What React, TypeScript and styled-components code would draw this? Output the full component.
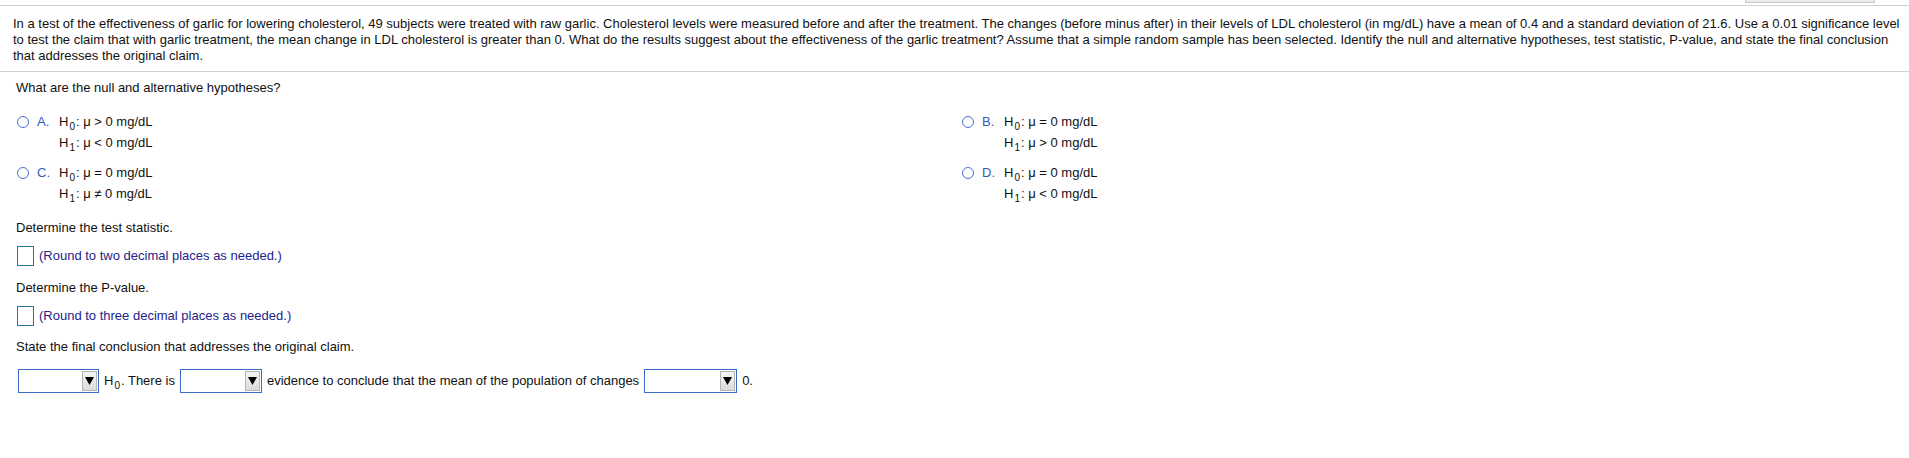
import React from "react";
import styled, { createGlobalStyle } from "styled-components";

const Global = createGlobalStyle`
  html, body { margin: 0; padding: 0; background: #fff; }
  body { font-family: "Liberation Sans", Arial, sans-serif; font-size: 13px; color: #111; }
`;

const Page = styled.div`
  width: 1909px;
  min-height: 458px;
  background: #fff;
`;

const TopStrip = styled.div`
  height: 5px;
  border-bottom: 1px solid #cfd0d6;
  display: flex;
  justify-content: flex-end;
  padding-right: 34px;
`;

const TabStub = styled.div`
  width: 128px;
  height: 2px;
  background: #ececec;
  border: 1px solid #c8c8c8;
  border-top: none;
`;

const Problem = styled.div`
  padding: 10px 8px 7px 13px;
  line-height: 16px;
`;

const Separator = styled.div`
  height: 1px;
  background: #cfd0d6;
`;

const Body = styled.div`
  padding: 8px 0 0 16px;
  line-height: 16px;
`;

const Prompt = styled.div<{ $mt?: number }>`
  margin-top: ${(p) => p.$mt ?? 0}px;
`;

const Options = styled.div`
  display: grid;
  grid-template-columns: 945px 1fr;
  row-gap: 10px;
  margin-top: 16px;
`;

const Option = styled.div`
  display: flex;
  align-items: flex-start;
`;

const Radio = styled.span`
  width: 10px;
  height: 10px;
  border: 1.5px solid #4a6fd3;
  border-radius: 50%;
  margin: 4px 0 0 1px;
  flex: none;
`;

const Letter = styled.span`
  color: #3457c0;
  width: 30px;
  padding-left: 8px;
  box-sizing: border-box;
  line-height: 20px;
  flex: none;
`;

const Hyp = styled.div`
  display: flex;
  flex-direction: column;
`;

const HypLine = styled.div`
  height: 20.5px;
  line-height: 20px;
  white-space: nowrap;
`;

const Sub = styled.span`
  font-size: 10px;
  position: relative;
  top: 4px;
  margin: 0 1px 0 1px;
`;

const AnswerRow = styled.div`
  display: flex;
  align-items: center;
  margin-top: 10px;
  height: 20px;
`;

const InputBox = styled.span`
  width: 15px;
  height: 18px;
  border: 1px solid #1f7a9e;
  margin-left: 1px;
  flex: none;
`;

const Hint = styled.span`
  color: #23238c;
  margin-left: 5px;
`;

const ConclusionRow = styled.div`
  display: flex;
  align-items: center;
  margin-top: 14px;
  white-space: nowrap;
`;

const Select = styled.span<{ $w: number }>`
  display: inline-flex;
  justify-content: flex-end;
  align-items: center;
  width: ${(p) => p.$w}px;
  height: 24px;
  box-sizing: border-box;
  border: 1px solid #3b6ccc;
  background: #fff;
  padding-right: 1px;
  flex: none;
`;

const ArrowBtn = styled.span`
  width: 15px;
  height: 20px;
  box-sizing: border-box;
  border: 1px solid #b5b5b5;
  background: linear-gradient(#f4f4f4, #dcdcdc);
  display: flex;
  align-items: center;
  justify-content: center;
`;

const Word = styled.span`
  margin: 0 5px;
`;

const FirstSelectWrap = styled.span`
  margin-left: 2px;
  display: inline-flex;
`;

const Triangle = () => (
  <svg width="9" height="8" viewBox="0 0 9 8">
    <path d="M0 0 H9 L4.5 8 Z" fill="#000" />
  </svg>
);

const Dropdown = ({ w }: { w: number }) => (
  <Select $w={w}>
    <ArrowBtn>
      <Triangle />
    </ArrowBtn>
  </Select>
);

type Opt = { letter: string; h0: string; h1: string };

const options: Opt[] = [
  { letter: "A.", h0: "\u03bc > 0 mg/dL", h1: "\u03bc < 0 mg/dL" },
  { letter: "B.", h0: "\u03bc = 0 mg/dL", h1: "\u03bc > 0 mg/dL" },
  { letter: "C.", h0: "\u03bc = 0 mg/dL", h1: "\u03bc \u2260 0 mg/dL" },
  { letter: "D.", h0: "\u03bc = 0 mg/dL", h1: "\u03bc < 0 mg/dL" },
];

export default function App() {
  return (
    <Page>
      <Global />
      <TopStrip>
        <TabStub />
      </TopStrip>
      <Problem>
        In a test of the effectiveness of garlic for lowering cholesterol, 49 subjects were treated with raw garlic. Cholesterol levels were
        measured before and after the treatment. The changes (before minus after) in their levels of LDL cholesterol (in mg/dL) have a mean
        of 0.4 and a standard deviation of 21.6. Use a 0.01 significance level to test the claim that with garlic treatment, the mean change
        in LDL cholesterol is greater than 0. What do the results suggest about the effectiveness of the garlic treatment? Assume that a
        simple random sample has been selected. Identify the null and alternative hypotheses, test statistic, P-value, and state the final
        conclusion that addresses the original claim.
      </Problem>
      <Separator />
      <Body>
        <Prompt>What are the null and alternative hypotheses?</Prompt>
        <Options>
          {options.map((o) => (
            <Option key={o.letter}>
              <Radio />
              <Letter>{o.letter}</Letter>
              <Hyp>
                <HypLine>
                  H<Sub>0</Sub>: {o.h0}
                </HypLine>
                <HypLine>
                  H<Sub>1</Sub>: {o.h1}
                </HypLine>
              </Hyp>
            </Option>
          ))}
        </Options>
        <Prompt $mt={16}>Determine the test statistic.</Prompt>
        <AnswerRow>
          <InputBox />
          <Hint>(Round to two decimal places as needed.)</Hint>
        </AnswerRow>
        <Prompt $mt={14}>Determine the P-value.</Prompt>
        <AnswerRow>
          <InputBox />
          <Hint>(Round to three decimal places as needed.)</Hint>
        </AnswerRow>
        <Prompt $mt={13}>State the final conclusion that addresses the original claim.</Prompt>
        <ConclusionRow>
          <FirstSelectWrap>
            <Dropdown w={81} />
          </FirstSelectWrap>
          <Word>
            H<Sub>0</Sub>. There is
          </Word>
          <Dropdown w={82} />
          <Word>evidence to conclude that the mean of the population of changes</Word>
          <Dropdown w={93} />
          <Word>0.</Word>
        </ConclusionRow>
      </Body>
    </Page>
  );
}
